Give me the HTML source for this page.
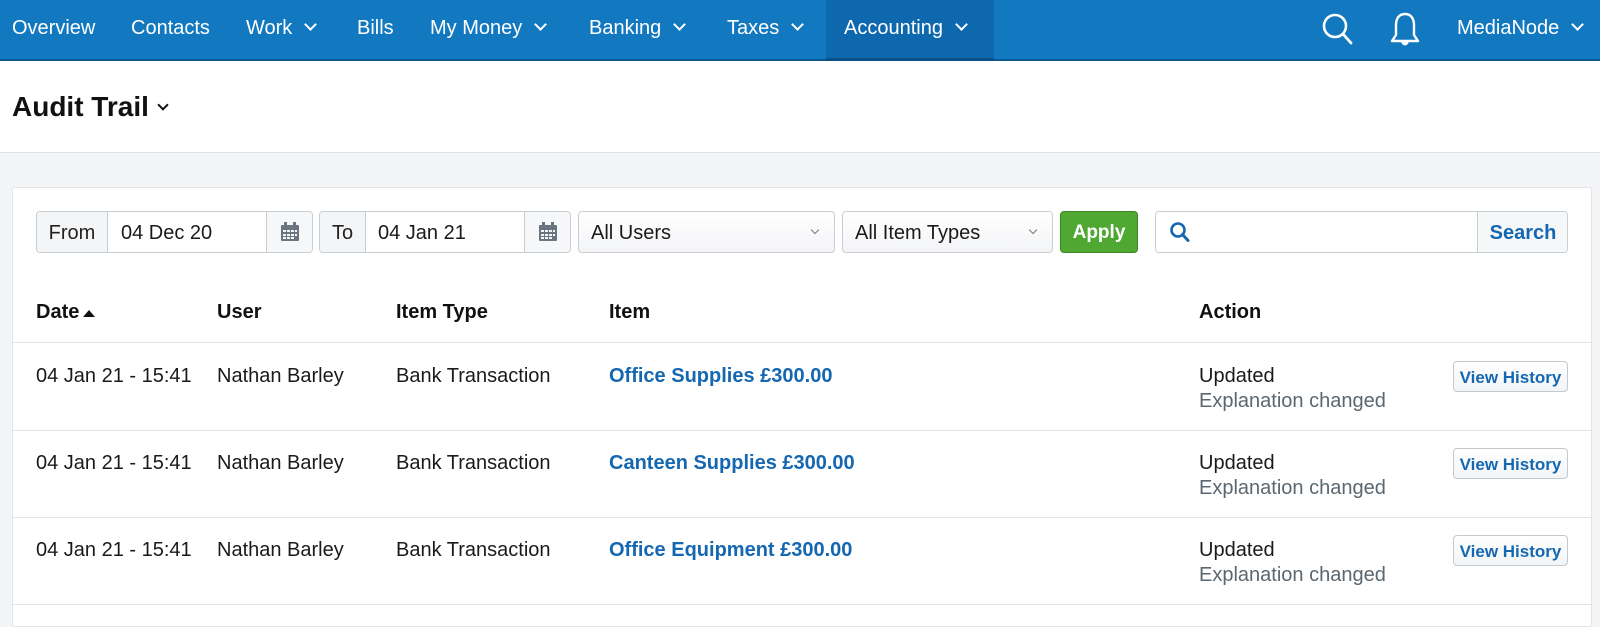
<!DOCTYPE html>
<html><head><meta charset="utf-8"><style>
*{box-sizing:border-box;margin:0;padding:0}
body{width:1600px;height:612px;overflow:hidden;background:#f3f4f6;font-family:"Liberation Sans",Arial,sans-serif;color:#1a1a1a;position:relative}
.nav{position:absolute;left:0;top:0;width:1600px;height:61px;background:#1279c0;border-bottom:2px solid #0a5a96}
.nav .it{position:absolute;top:0;height:59px;line-height:57px;color:#fff;font-size:20px;white-space:nowrap}
.nav .act{background:#0e68ad;border-bottom:3px solid #0a4f86;height:61px}
.chev{display:inline-block;width:9px;height:9px;border-right:2.5px solid #fff;border-bottom:2.5px solid #fff;transform:rotate(45deg);margin-left:14px;position:relative;top:-5px}
.head{position:absolute;left:0;top:61px;width:1600px;height:92px;background:#fff;border-bottom:1px solid #dcdfe3}
.title{position:absolute;left:12px;top:91px;font-size:28px;font-weight:bold;color:#111}
.tchev{display:inline-block;width:8px;height:8px;border-right:2.5px solid #111;border-bottom:2.5px solid #111;transform:rotate(45deg);margin-left:10px;position:relative;top:-7px}
.card{position:absolute;left:12px;top:187px;width:1580px;height:440px;background:#fff;border:1px solid #e3e5e8;border-radius:3px}
.box{position:absolute;top:211px;height:42px;border:1px solid #c9ced3;border-radius:4px;background:#fff;font-size:20px;overflow:hidden}
.seg{position:absolute;top:0;height:40px;line-height:43px}
.lab{background:#f4f5f7;border-right:1px solid #c9ced3;text-align:center;color:#222}
.cal{background:#f6f7f8;border-left:1px solid #c9ced3}
.sel{background:linear-gradient(#fff,#f3f4f6)}
.dd{position:absolute;right:16px;top:15px;width:6px;height:6px;border-right:1.5px solid #777;border-bottom:1.5px solid #777;transform:rotate(45deg)}
.apply{position:absolute;left:1060px;top:211px;width:78px;height:42px;background:#4ea832;border:1px solid #3a8a24;border-radius:4px;color:#fff;font-weight:bold;font-size:19px;text-align:center;line-height:42px}
.th{position:absolute;top:301px;font-size:20px;font-weight:bold;color:#111}
.line{position:absolute;left:13px;width:1578px;height:1px;background:#e2e5e8}
.td{position:absolute;font-size:20px;color:#1a1a1a;white-space:nowrap}
.lnk{color:#1467b0;font-weight:bold}
.sub{color:#5b6770}
.vh{position:absolute;left:1453px;width:115px;height:31px;border:1px solid #c3c9cf;border-radius:4px;background:linear-gradient(#fff,#f2f4f6);color:#1467b0;font-weight:bold;font-size:17px;text-align:center;line-height:31px}
</style></head><body>
<div class="nav">
<div class="it" style="left:12px">Overview</div>
<div class="it" style="left:131px">Contacts</div>
<div class="it" style="left:246px">Work<span class="chev"></span></div>
<div class="it" style="left:357px">Bills</div>
<div class="it" style="left:430px">My Money<span class="chev"></span></div>
<div class="it" style="left:589px">Banking<span class="chev"></span></div>
<div class="it" style="left:727px">Taxes<span class="chev"></span></div>
<div class="it act" style="left:826px;width:168px;padding-left:18px">Accounting<span class="chev"></span></div>
<svg style="position:absolute;left:1320px;top:11px" width="36" height="36" viewBox="0 0 36 36"><circle cx="15" cy="15" r="11" fill="none" stroke="#fff" stroke-width="2.6"/><path d="M23 23 L31 32" stroke="#fff" stroke-width="2.8" stroke-linecap="round"/></svg>
<svg style="position:absolute;left:1389px;top:11px" width="32" height="38" viewBox="0 0 32 38"><path d="M16 3 C9 3 7 9 7 14 L7 24 L3 30 L29 30 L25 24 L25 14 C25 9 23 3 16 3 Z" fill="none" stroke="#fff" stroke-width="2.4" stroke-linejoin="round"/><path d="M13 31 Q16 36 19 31" fill="#fff" stroke="#fff" stroke-width="2"/></svg>
<div class="it" style="left:1457px">MediaNode<span class="chev"></span></div>
</div>
<div class="head"></div>
<div class="title">Audit Trail<span class="tchev"></span></div>
<div class="card"></div>

<div class="box" style="left:36px;width:277px">
<div class="seg lab" style="left:0;width:71px">From</div>
<div class="seg" style="left:84px">04 Dec 20</div>
<div class="seg cal" style="left:229px;width:46px"><svg style="position:absolute;left:13px;top:10px" width="20" height="20" viewBox="0 0 20 20"><rect x="1" y="3" width="18" height="16" rx="1" fill="#6b7580"/><rect x="4" y="0" width="3" height="5" fill="#6b7580"/><rect x="13" y="0" width="3" height="5" fill="#6b7580"/><g fill="#f6f7f8"><rect x="3" y="8" width="3" height="2"/><rect x="7" y="8" width="3" height="2"/><rect x="11" y="8" width="3" height="2"/><rect x="15" y="8" width="2" height="2"/><rect x="3" y="12" width="3" height="2"/><rect x="7" y="12" width="3" height="2"/><rect x="11" y="12" width="3" height="2"/><rect x="15" y="12" width="2" height="2"/><rect x="3" y="15" width="3" height="2"/><rect x="7" y="15" width="3" height="2"/><rect x="11" y="15" width="3" height="2"/></g></svg></div>
</div>
<div class="box" style="left:319px;width:252px">
<div class="seg lab" style="left:0;width:46px">To</div>
<div class="seg" style="left:58px">04 Jan 21</div>
<div class="seg cal" style="left:204px;width:46px"><svg style="position:absolute;left:13px;top:10px" width="20" height="20" viewBox="0 0 20 20"><rect x="1" y="3" width="18" height="16" rx="1" fill="#6b7580"/><rect x="4" y="0" width="3" height="5" fill="#6b7580"/><rect x="13" y="0" width="3" height="5" fill="#6b7580"/><g fill="#f6f7f8"><rect x="3" y="8" width="3" height="2"/><rect x="7" y="8" width="3" height="2"/><rect x="11" y="8" width="3" height="2"/><rect x="15" y="8" width="2" height="2"/><rect x="3" y="12" width="3" height="2"/><rect x="7" y="12" width="3" height="2"/><rect x="11" y="12" width="3" height="2"/><rect x="15" y="12" width="2" height="2"/><rect x="3" y="15" width="3" height="2"/><rect x="7" y="15" width="3" height="2"/><rect x="11" y="15" width="3" height="2"/></g></svg></div>
</div>
<div class="box sel" style="left:578px;width:257px"><div class="seg" style="left:12px">All Users</div><div class="dd"></div></div>
<div class="box sel" style="left:842px;width:211px"><div class="seg" style="left:12px">All Item Types</div><div class="dd"></div></div>
<div class="apply">Apply</div>
<div class="box" style="left:1155px;width:413px">
<svg style="position:absolute;left:13px;top:9px" width="22" height="22" viewBox="0 0 22 22"><circle cx="9" cy="9" r="6.5" fill="none" stroke="#1467b0" stroke-width="2.6"/><path d="M13.5 13.5 L19 19.5" stroke="#1467b0" stroke-width="3" stroke-linecap="round"/></svg>
<div class="seg" style="left:321px;width:91px;border-left:1px solid #c9ced3;background:#f6f7f8;text-align:center;color:#1467b0;font-weight:bold">Search</div>
</div>

<div class="th" style="left:36px">Date<svg width="14" height="10" style="margin-left:3px" viewBox="0 0 14 10"><path d="M1 9 L7 2 L13 9 Z" fill="#111"/></svg></div>
<div class="th" style="left:217px">User</div>
<div class="th" style="left:396px">Item Type</div>
<div class="th" style="left:609px">Item</div>
<div class="th" style="left:1199px">Action</div>
<div class="line" style="top:342px"></div>

<div class="td" style="left:36px;top:365px">04 Jan 21 - 15:41</div>
<div class="td" style="left:217px;top:365px">Nathan Barley</div>
<div class="td" style="left:396px;top:365px">Bank Transaction</div>
<div class="td lnk" style="left:609px;top:365px">Office Supplies £300.00</div>
<div class="td" style="left:1199px;top:365px">Updated</div>
<div class="td sub" style="left:1199px;top:390px">Explanation changed</div>
<div class="vh" style="top:361px">View History</div>
<div class="line" style="top:430px"></div>

<div class="td" style="left:36px;top:452px">04 Jan 21 - 15:41</div>
<div class="td" style="left:217px;top:452px">Nathan Barley</div>
<div class="td" style="left:396px;top:452px">Bank Transaction</div>
<div class="td lnk" style="left:609px;top:452px">Canteen Supplies £300.00</div>
<div class="td" style="left:1199px;top:452px">Updated</div>
<div class="td sub" style="left:1199px;top:477px">Explanation changed</div>
<div class="vh" style="top:448px">View History</div>
<div class="line" style="top:517px"></div>

<div class="td" style="left:36px;top:539px">04 Jan 21 - 15:41</div>
<div class="td" style="left:217px;top:539px">Nathan Barley</div>
<div class="td" style="left:396px;top:539px">Bank Transaction</div>
<div class="td lnk" style="left:609px;top:539px">Office Equipment £300.00</div>
<div class="td" style="left:1199px;top:539px">Updated</div>
<div class="td sub" style="left:1199px;top:564px">Explanation changed</div>
<div class="vh" style="top:535px">View History</div>
<div class="line" style="top:604px"></div>
</body></html>
